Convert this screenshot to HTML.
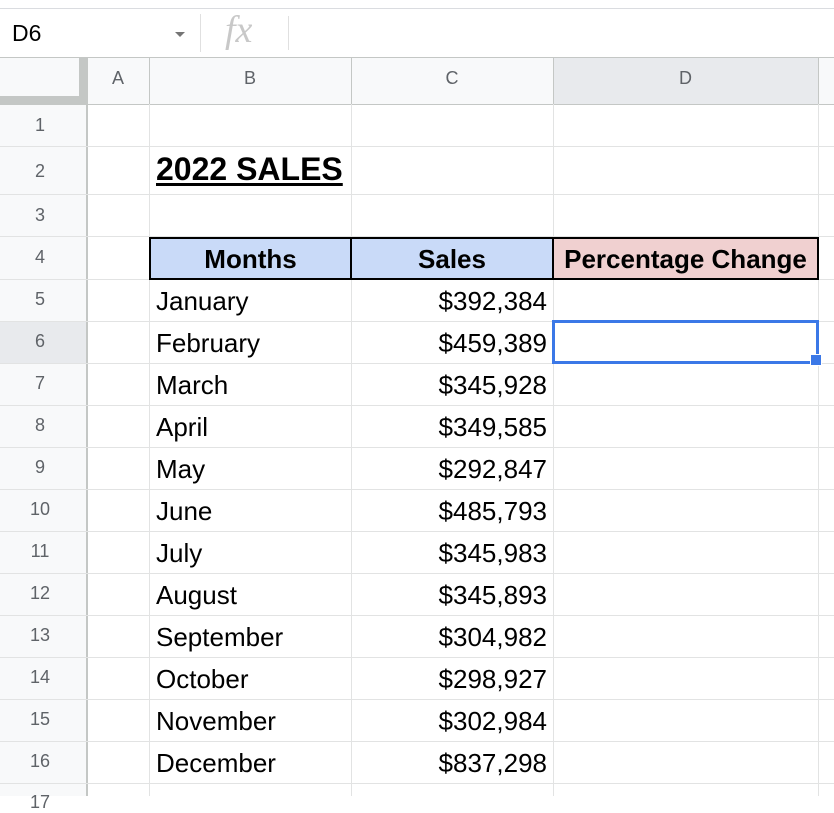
<!DOCTYPE html>
<html><head><meta charset="utf-8"><style>
*{margin:0;padding:0;box-sizing:border-box}
body{width:834px;height:796px;overflow:hidden;background:#fff;font-family:"Liberation Sans",Arial,sans-serif;position:relative}
.a{position:absolute}
.hl{position:absolute;height:1px;background:#e2e3e3}
.vl{position:absolute;width:1px;background:#e2e3e3}
.rn{position:absolute;left:0;width:80px;text-align:center;color:#5f6368;font-size:18px}
.cell{position:absolute;font-size:26px;color:#000;line-height:42px}
</style></head><body>
<div class="a" style="left:0;top:8px;width:834px;height:1px;background:#dadce0"></div>
<div class="a" style="left:12px;top:20px;font-size:23px;color:#000">D6</div>
<div class="a" style="left:175px;top:32px;width:0;height:0;border-left:5px solid transparent;border-right:5px solid transparent;border-top:5px solid #757575"></div>
<div class="a" style="left:200px;top:14px;width:1px;height:38px;background:#e0e0e0"></div>
<div class="a" style="left:225px;top:8px;font-family:'Liberation Serif',serif;font-style:italic;font-size:38px;color:#c8c8c8">fx</div>
<div class="a" style="left:288px;top:16px;width:1px;height:34px;background:#e0e0e0"></div>
<div class="a" style="left:0;top:57px;width:834px;height:47px;background:#f8f9fa"></div>
<div class="a" style="left:553px;top:57px;width:265px;height:47px;background:#e8eaed"></div>
<div class="a" style="left:0;top:104px;width:87px;height:692px;background:#f8f9fa"></div>
<div class="a" style="left:0;top:57px;width:834px;height:1px;background:#c4c7c5"></div>
<div class="a" style="left:0;top:104px;width:834px;height:1px;background:#c4c7c5"></div>
<div class="a" style="left:86px;top:57px;width:2px;height:739px;background:#c4c7c5"></div>
<div class="a" style="left:79px;top:57px;width:8px;height:47px;background:#c4c7c5"></div>
<div class="a" style="left:0;top:96px;width:87px;height:8px;background:#c4c7c5"></div>
<div class="a" style="left:87px;top:68px;width:62px;text-align:center;font-size:18px;color:#5f6368">A</div>
<div class="a" style="left:149px;top:68px;width:202px;text-align:center;font-size:18px;color:#5f6368">B</div>
<div class="a" style="left:351px;top:68px;width:202px;text-align:center;font-size:18px;color:#5f6368">C</div>
<div class="a" style="left:553px;top:68px;width:265px;text-align:center;font-size:18px;color:#5f6368">D</div>
<div class="vl" style="left:149px;top:57px;height:739px"></div>
<div class="vl" style="left:351px;top:57px;height:739px"></div>
<div class="vl" style="left:553px;top:57px;height:739px"></div>
<div class="vl" style="left:818px;top:57px;height:739px"></div>
<div class="vl" style="left:149px;top:57px;height:47px;background:#c4c7c5"></div>
<div class="vl" style="left:351px;top:57px;height:47px;background:#c4c7c5"></div>
<div class="vl" style="left:553px;top:57px;height:47px;background:#c4c7c5"></div>
<div class="vl" style="left:818px;top:57px;height:47px;background:#c4c7c5"></div>
<div class="hl" style="left:0;top:146px;width:834px"></div>
<div class="hl" style="left:0;top:194px;width:834px"></div>
<div class="hl" style="left:0;top:236px;width:834px"></div>
<div class="hl" style="left:0;top:279px;width:834px"></div>
<div class="hl" style="left:0;top:321px;width:834px"></div>
<div class="hl" style="left:0;top:363px;width:834px"></div>
<div class="hl" style="left:0;top:405px;width:834px"></div>
<div class="hl" style="left:0;top:447px;width:834px"></div>
<div class="hl" style="left:0;top:489px;width:834px"></div>
<div class="hl" style="left:0;top:531px;width:834px"></div>
<div class="hl" style="left:0;top:573px;width:834px"></div>
<div class="hl" style="left:0;top:615px;width:834px"></div>
<div class="hl" style="left:0;top:657px;width:834px"></div>
<div class="hl" style="left:0;top:699px;width:834px"></div>
<div class="hl" style="left:0;top:741px;width:834px"></div>
<div class="hl" style="left:0;top:783px;width:834px"></div>
<div class="rn" style="top:115px">1</div>
<div class="rn" style="top:161px">2</div>
<div class="rn" style="top:205px">3</div>
<div class="rn" style="top:247px">4</div>
<div class="rn" style="top:289px">5</div>
<div class="a" style="left:0;top:322px;width:86px;height:41px;background:#e8eaed"></div>
<div class="rn" style="top:331px">6</div>
<div class="rn" style="top:373px">7</div>
<div class="rn" style="top:415px">8</div>
<div class="rn" style="top:457px">9</div>
<div class="rn" style="top:499px">10</div>
<div class="rn" style="top:541px">11</div>
<div class="rn" style="top:583px">12</div>
<div class="rn" style="top:625px">13</div>
<div class="rn" style="top:667px">14</div>
<div class="rn" style="top:709px">15</div>
<div class="rn" style="top:751px">16</div>
<div class="rn" style="top:792px">17</div>
<div class="a" style="left:156px;top:151px;font-size:32px;font-weight:bold;text-decoration:underline;text-underline-offset:3px">2022 SALES</div>
<div class="a" style="left:149px;top:237px;width:203px;height:43px;background:#c9daf8;border:2px solid #000;font-size:26px;font-weight:bold;text-align:center;line-height:40px">Months</div>
<div class="a" style="left:350px;top:237px;width:204px;height:43px;background:#c9daf8;border:2px solid #000;font-size:26px;font-weight:bold;text-align:center;line-height:40px">Sales</div>
<div class="a" style="left:552px;top:237px;width:267px;height:43px;background:#f0d0d0;border:2px solid #000;font-size:26px;font-weight:bold;text-align:center;line-height:40px;white-space:nowrap">Percentage Change</div>
<div class="cell" style="left:156px;top:280px">January<br>February<br>March<br>April<br>May<br>June<br>July<br>August<br>September<br>October<br>November<br>December</div>
<div class="cell" style="left:351px;width:196px;text-align:right;top:280px">$392,384<br>$459,389<br>$345,928<br>$349,585<br>$292,847<br>$485,793<br>$345,983<br>$345,893<br>$304,982<br>$298,927<br>$302,984<br>$837,298</div>
<div class="a" style="left:552px;top:320px;width:267px;height:44px;border:3px solid #3b78e7"></div>
<div class="a" style="left:810px;top:354px;width:12px;height:12px;background:#3b78e7;border:1px solid #fff"></div>
</body></html>
